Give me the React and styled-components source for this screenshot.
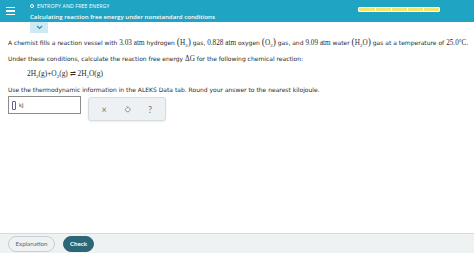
import React from 'react';
import styled, { createGlobalStyle } from 'styled-components';

const Global = createGlobalStyle`
  html, body { margin: 0; padding: 0; background: #fff; }
  #root { height: 100vh; }
  *, *::before, *::after { box-sizing: border-box; }
`;

const Page = styled.div`
  height: 100vh;
  display: flex;
  flex-direction: column;
  font-family: "DejaVu Sans", Verdana, sans-serif;
  color: #2a2a2a;
`;

const Header = styled.div`
  height: 22px;
  background: #1fa4c3;
  display: flex;
  align-items: center;
  padding: 0 6px;
  color: #fff;
`;

const Burger = styled.div`
  width: 9px;
  display: flex;
  flex-direction: column;
  gap: 2px;
  margin-right: 15px;
  span { height: 1.2px; background: #fff; display: block; }
`;

const Titles = styled.div`
  flex: 1;
  display: flex;
  flex-direction: column;
  gap: 2px;
  font-family: "Open Sans", Lato, sans-serif;
`;

const Topic = styled.div`
  font-size: 5.2px;
  letter-spacing: 0.15px;
  display: flex;
  align-items: center;
  gap: 3px;
  &::before {
    content: '';
    width: 4px;
    height: 4px;
    border: 0.8px solid #fff;
    border-radius: 50%;
  }
`;

const Title = styled.div`
  font-size: 6.1px;
  font-weight: 600;
`;

const Progress = styled.div`
  display: flex;
  margin-right: 28px;
  margin-top: -3px;
  border: 1px solid #fff;
  border-radius: 1px;
`;

const Seg = styled.div`
  width: 16px;
  height: 3px;
  background: #f3e66a;
  border-left: ${({ first }) => (first ? 'none' : '1px solid #fff')};
`;

const Tab = styled.div`
  margin-left: 30px;
  width: 18px;
  height: 11px;
  background: #cde9f3;
  display: flex;
  align-items: center;
  justify-content: center;
`;

const Main = styled.div`
  flex: 1;
  padding: 0 8px;
  font-size: 6px;
`;

const Para = styled.p`
  margin: ${({ top }) => top}px 0 0;
  white-space: nowrap;
  height: 10px;
  line-height: 10px;
  sub { font-size: 5px; line-height: 0; vertical-align: -1.5px; }
`;

const Math = styled.span`
  font-family: "Liberation Serif", "Times New Roman", serif;
  font-size: 7.2px;
`;

const Paren = styled.span`
  font-family: "Liberation Serif", serif;
  font-size: 9.5px;
  line-height: 0;
  color: #333;
`;

const Equation = styled.div`
  margin: 5px 0 0 19px;
  height: 10px;
  font-family: "Liberation Serif", "Times New Roman", serif;
  font-size: 7.4px;
  line-height: 10px;
  sub { font-size: 5px; line-height: 0; vertical-align: -1.5px; }
`;

const AnswerRow = styled.div`
  display: flex;
  align-items: flex-start;
  gap: 7px;
  margin-top: 1px;
`;

const Input = styled.div`
  width: 73px;
  height: 18px;
  flex: none;
  border: 1px solid #8c8c8c;
  display: flex;
  align-items: center;
  padding-left: 3px;
  gap: 3px;
  font-size: 5px;
`;

const Cursor = styled.div`
  width: 4px;
  height: 9px;
  border: 1px solid #6b56a0;
  border-radius: 1px;
`;

const Keypad = styled.div`
  margin-top: 1px;
  width: 78px;
  height: 24px;
  flex: none;
  background: #eef1f3;
  border: 1px solid #d6dbde;
  border-radius: 3px;
  box-shadow: 0 1px 2px rgba(0, 0, 0, 0.08);
  display: flex;
  align-items: center;
  justify-content: space-between;
  padding: 0 9px;
  color: #6e7c84;
`;

const Key = styled.div`
  width: 12px;
  display: flex;
  justify-content: center;
  font-family: Lato, sans-serif;
  font-size: 9px;
`;

const Footer = styled.div`
  height: 20px;
  border-top: 1px solid #d6dadc;
  background: #eef2f3;
  display: flex;
  align-items: center;
  padding: 0 8px;
  gap: 8px;
  font-family: Lato, "Open Sans", sans-serif;
`;

const Button = styled.div`
  height: 16px;
  width: ${({ primary }) => (primary ? 31 : 47)}px;
  border-radius: 8px;
  display: flex;
  align-items: center;
  justify-content: center;
  font-size: 6.2px;
  font-weight: ${({ primary }) => (primary ? 700 : 400)};
  color: ${({ primary }) => (primary ? '#fff' : '#5a6a72')};
  background: ${({ primary }) => (primary ? '#2d6676' : '#eef2f3')};
  border: 1px solid ${({ primary }) => (primary ? '#2d6676' : '#c8ced1')};
`;

const App = () => {
  return (
    <Page>
      <Global />
      <Header>
        <Burger>
          <span />
          <span />
          <span />
        </Burger>
        <Titles>
          <Topic>ENTROPY AND FREE ENERGY</Topic>
          <Title>Calculating reaction free energy under nonstandard conditions</Title>
        </Titles>
        <Progress>
          {[0, 1, 2, 3, 4].map((i) => (
            <Seg key={i} first={i === 0} />
          ))}
        </Progress>
      </Header>
      <Tab>
        <svg width="7" height="5" viewBox="0 0 7 5">
          <path d="M1 1 L3.5 3.5 L6 1" fill="none" stroke="#2b8fb4" strokeWidth="1.2" />
        </svg>
      </Tab>
      <Main>
        <Para top={5}>
          A chemist fills a reaction vessel with <Math>3.03</Math> <Math>atm</Math> hydrogen{' '}
          <Paren>(</Paren><Math>H<sub>2</sub></Math><Paren>)</Paren> gas, <Math>0.828</Math>{' '}
          <Math>atm</Math> oxygen <Paren>(</Paren><Math>O<sub>2</sub></Math><Paren>)</Paren> gas, and{' '}
          <Math>9.09</Math> <Math>atm</Math> water <Paren>(</Paren><Math>H<sub>2</sub>O</Math><Paren>)</Paren>{' '}
          gas at a temperature of <Math>25.0°C</Math>.
        </Para>
        <Para top={6}>
          Under these conditions, calculate the reaction free energy <Math>ΔG</Math> for the following chemical reaction:
        </Para>
        <Equation>
          2H<sub>2</sub>(g)+O<sub>2</sub>(g) ⇌ 2H<sub>2</sub>O(g)
        </Equation>
        <Para top={6}>
          Use the thermodynamic information in the ALEKS Data tab. Round your answer to the nearest kilojoule.
        </Para>
        <AnswerRow>
          <Input>
            <Cursor />
            kJ
          </Input>
          <Keypad>
            <Key>×</Key>
            <Key>
              <svg width="7" height="7" viewBox="0 0 10 10">
                <path d="M2.5 3.5 A3.3 3.3 0 1 0 5 1.8" fill="none" stroke="#6e7c84" strokeWidth="1.1" />
                <path d="M3.5 0.5 L5.4 1.8 L3.8 3.4" fill="none" stroke="#6e7c84" strokeWidth="1.1" />
              </svg>
            </Key>
            <Key>?</Key>
          </Keypad>
        </AnswerRow>
      </Main>
      <Footer>
        <Button>Explanation</Button>
        <Button primary>Check</Button>
      </Footer>
    </Page>
  );
};

export default App;
